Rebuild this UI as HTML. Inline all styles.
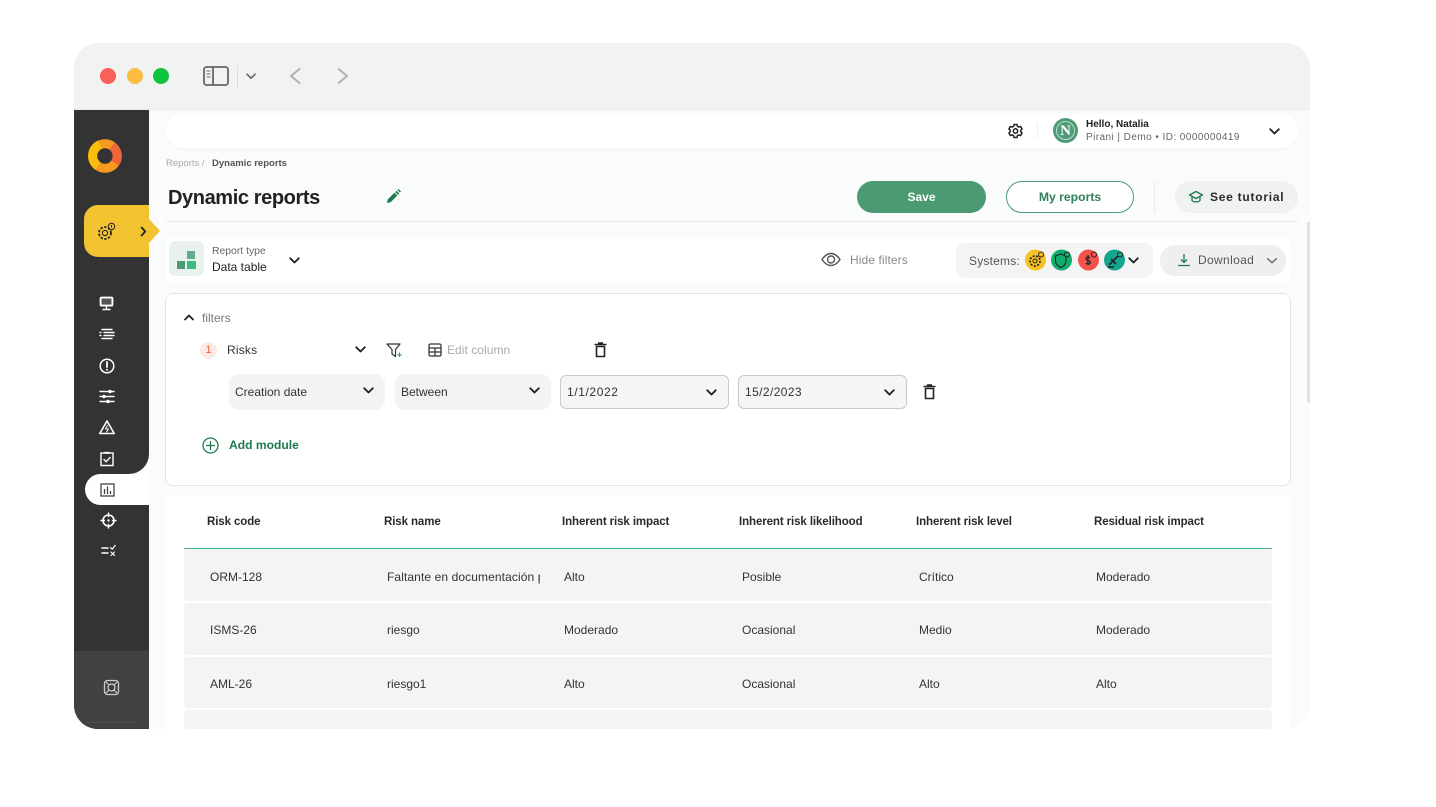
<!DOCTYPE html>
<html lang="en">
<head>
<meta charset="utf-8">
<title>Dynamic reports</title>
<style>
*{box-sizing:border-box;margin:0;padding:0}
html,body{width:1436px;height:807px;background:#fff;overflow:hidden}
body{position:relative;font-family:"Liberation Sans",sans-serif;color:#222}
.a{position:absolute}
.t{position:absolute;white-space:nowrap;font-size:12px;line-height:14px;color:#333}
svg{position:absolute;overflow:visible}
.win{left:74px;top:43px;width:1236px;height:686px;border-radius:24px;overflow:hidden;background:#fafbfc}
.ch{fill:none;stroke:#1e1e1e;stroke-width:1.8;stroke-linecap:round;stroke-linejoin:round}
.ic{fill:none;stroke:#fff;stroke-width:1.4;stroke-linecap:round;stroke-linejoin:round}
.sel{position:absolute;background:#f3f3f3;border-radius:10px}
.row{position:absolute;left:184px;width:1088px;background:#f4f4f4;border-radius:3px}
.th{position:absolute;top:515px;font-size:11.5px;line-height:14px;font-weight:bold;color:#2a2a2a;white-space:nowrap;letter-spacing:-.1px}
.td{position:absolute;font-size:12px;line-height:14px;color:#333;white-space:nowrap}
</style>
</head>
<body>
<div class="a win"></div>
<!-- title bar -->
<div class="a" style="left:74px;top:43px;width:1236px;height:67px;background:#f1f2f2;border-radius:24px 24px 0 0;border-bottom:1px solid #e8eaea"></div>
<div class="a" style="left:100px;top:68px;width:16px;height:16px;border-radius:50%;background:#f8605a"></div>
<div class="a" style="left:127px;top:68px;width:16px;height:16px;border-radius:50%;background:#fbbd3f"></div>
<div class="a" style="left:153px;top:68px;width:16px;height:16px;border-radius:50%;background:#0dc23f"></div>
<svg style="left:203px;top:66px" width="26" height="20" viewBox="0 0 26 20"><rect x="1" y="1" width="24" height="18" rx="2.5" fill="none" stroke="#666" stroke-width="1.8"/><path d="M10 1v18" stroke="#666" stroke-width="1.8"/><path d="M3.5 5h4M3.5 8h4M3.5 11h4" stroke="#888" stroke-width="1.2"/></svg>
<div class="a" style="left:237px;top:65px;width:1px;height:23px;background:#dcdcdc"></div>
<svg style="left:246px;top:73px" width="10" height="7" viewBox="0 0 10 7"><path d="M1 1.2l4 4 4-4" fill="none" stroke="#666" stroke-width="1.6" stroke-linecap="round" stroke-linejoin="round"/></svg>
<svg style="left:289px;top:67px" width="13" height="18" viewBox="0 0 13 18"><path d="M11 1.5L2 9l9 7.5" fill="none" stroke="#b0b0b0" stroke-width="1.9"/></svg>
<svg style="left:336px;top:67px" width="13" height="18" viewBox="0 0 13 18"><path d="M2 1.5L11 9l-9 7.5" fill="none" stroke="#b0b0b0" stroke-width="1.9"/></svg>

<!-- sidebar -->
<div class="a" style="left:74px;top:110px;width:75px;height:619px;background:#333;border-radius:0 0 0 24px;overflow:hidden">
  <div class="a" style="left:0;top:541px;width:75px;height:78px;background:#414141"></div>
  <div class="a" style="left:12px;top:612px;width:52px;height:1px;background:#4f4f4f"></div>
</div>
<div class="a" style="left:149px;top:110px;width:1161px;height:619px;background:#fafbfc;border-radius:16px 0 24px 0"></div>
<!-- active item -->
<div class="a" style="left:129px;top:454px;width:20px;height:20px;background:#fafbfc"></div>
<div class="a" style="left:109px;top:434px;width:40px;height:40px;background:#333;border-radius:0 0 20px 0"></div>
<div class="a" style="left:85px;top:474px;width:64px;height:31px;background:#fff;border-radius:16px 0 0 16px"></div>
<!-- logo -->
<svg style="left:88px;top:139px" width="34" height="34" viewBox="0 0 34 34">
  <circle cx="17" cy="17" r="12.3" fill="none" stroke="#f59a1e" stroke-width="9"/>
  <path d="M24 7A12.3 12.3 0 0 1 27 24" fill="none" stroke="#f0643c" stroke-width="9"/>
  <path d="M10 27A12.3 12.3 0 0 1 12 5.5" fill="none" stroke="#fbbc0c" stroke-width="9"/>
</svg>
<!-- yellow tab -->
<div class="a" style="left:84px;top:205px;width:65px;height:52px;background:#f2c230;border-radius:14px 0 0 14px"></div>
<svg style="left:149px;top:219px" width="11" height="24" viewBox="0 0 11 24"><path d="M0 0l11 12L0 24z" fill="#f2c230"/></svg>
<svg style="left:97px;top:222px" width="20" height="19" viewBox="0 0 20 19">
  <circle cx="8" cy="11" r="2.6" fill="none" stroke="#222" stroke-width="1.1"/>
  <circle cx="8" cy="11" r="6" fill="none" stroke="#222" stroke-width="1.8" stroke-dasharray="2.3 1.6"/>
  <circle cx="14.5" cy="4.5" r="3.2" fill="none" stroke="#222" stroke-width="1"/>
  <path d="M14.5 3v2.5" stroke="#222" stroke-width="1"/>
</svg>
<svg style="left:140px;top:226px" width="7" height="11" viewBox="0 0 7 11"><path d="M1.2 1l4 4.5-4 4.500" fill="none" stroke="#222" stroke-width="1.8"/></svg>
<!-- sidebar icons -->
<svg style="left:98px;top:295px" width="18" height="17" viewBox="0 0 18 17"><rect x="2.6" y="2.6" width="11.8" height="8" rx=".8" fill="#555" stroke="#fff" stroke-width="1.9"/><path d="M8.5 12v2M5 14.500h7" class="ic"/></svg>
<svg style="left:99px;top:327px" width="17" height="15" viewBox="0 0 17 15"><path d="M3 2.5h10M5 5.5h10M5 8.5h10M3 11.5h10" class="ic"/><path d="M1 5.5h1M1 8.5h1" class="ic"/></svg>
<svg style="left:98px;top:357px" width="18" height="18" viewBox="0 0 18 18"><circle cx="9" cy="9" r="6.8" fill="none" stroke="#fff" stroke-width="1.5"/><path d="M9 5v5" class="ic" style="stroke-width:1.8"/><circle cx="9" cy="12.7" r="1" fill="#fff"/></svg>
<svg style="left:98px;top:388px" width="18" height="17" viewBox="0 0 18 17"><path d="M2 3.5h14M2 8.5h14M2 13.5h14" class="ic"/><circle cx="12" cy="3.5" r="1.7" fill="#fff"/><circle cx="6" cy="8.5" r="1.7" fill="#fff"/><circle cx="10" cy="13.5" r="1.7" fill="#fff"/></svg>
<svg style="left:98px;top:419px" width="18" height="17" viewBox="0 0 18 17"><path d="M9 2L1.8 14.500h14.4z" class="ic" style="stroke-width:1.6"/><path d="M9.5 6.500L7.500 10h3l-2 3" class="ic" style="stroke-width:1"/></svg>
<svg style="left:99px;top:450px" width="16" height="17" viewBox="0 0 16 17"><rect x="2" y="3" width="12" height="12.5" fill="none" stroke="#fff" stroke-width="1.4"/><path d="M5.500 1.800h5v2h-5z" fill="#fff"/><path d="M5 9.500l2.200 2.200L11 7.500" class="ic"/></svg>
<svg style="left:100px;top:483px" width="15" height="14" viewBox="0 0 15 14"><rect x="1" y="1" width="13" height="12" fill="none" stroke="#444" stroke-width="1.3"/><path d="M4.500 11V6M7.500 11V3.500M10.500 11V8" stroke="#444" stroke-width="1.3"/></svg>
<svg style="left:100px;top:512px" width="17" height="17" viewBox="0 0 17 17"><circle cx="8.5" cy="8.5" r="5.5" fill="none" stroke="#fff" stroke-width="1.6"/><path d="M8.500 1v3.500M8.500 12.500V16M1 8.500h3.500M12.500 8.500H16" class="ic"/><circle cx="8.5" cy="8.5" r="1.2" fill="#fff"/></svg>
<svg style="left:100px;top:544px" width="17" height="13" viewBox="0 0 17 13"><path d="M1.500 4h7M1.500 9h7" stroke="#fff" stroke-width="1.6"/><path d="M10.500 3.500l1.700 1.700 3-3.700M11 8l3.500 3.500M14.500 8L11 11.500" class="ic" style="stroke-width:1.2"/></svg>
<svg style="left:103px;top:679px" width="17" height="17" viewBox="0 0 17 17"><rect x="1.5" y="1.5" width="14" height="14" rx="3" fill="none" stroke="#ccc" stroke-width="1.3"/><circle cx="8.5" cy="8.5" r="3.5" fill="none" stroke="#ccc" stroke-width="1.3"/><path d="M3 3l3 3M14 3l-3 3M3 14l3-3M14 14l-3-3" stroke="#ccc" stroke-width="1.1"/></svg>

<!-- top bar -->
<div class="a" style="left:166px;top:113px;width:1132px;height:35px;background:#fff;border-radius:17px;box-shadow:0 1px 4px rgba(0,0,0,.03)"></div>
<svg style="left:1008px;top:123px" width="15" height="16" viewBox="0 0 15 16"><circle cx="7.5" cy="8" r="2.2" fill="none" stroke="#222" stroke-width="1.5"/><path d="M6 1.500h3l.4 1.800 1.500.8 1.800-.6 1.400 2.500-1.300 1.200v1.600l1.300 1.200-1.400 2.500-1.800-.6-1.500.8-.4 1.800H6l-.4-1.800-1.500-.8-1.800.6L.9 10l1.300-1.200V7.200L.9 6l1.400-2.500 1.800.6 1.500-.8z" fill="none" stroke="#222" stroke-width="1.5" stroke-linejoin="round"/></svg>
<div class="a" style="left:1037px;top:123px;width:1px;height:16px;background:#eee"></div>
<div class="a" style="left:1053px;top:118px;width:25px;height:25px;border-radius:50%;background:#4f9a77"></div>
<div class="a" style="left:1056px;top:121px;width:19px;height:19px;border-radius:50%;border:1px solid #bcdccd"></div>
<div class="t" style="left:1053px;top:122px;width:25px;text-align:center;color:#fff;font-family:'Liberation Serif',serif;font-weight:bold;font-size:15px;line-height:18px">N</div>
<div class="t" style="left:1086px;top:118px;font-size:10px;line-height:13px;font-weight:bold;color:#222;">Hello, Natalia</div>
<div class="t" style="left:1086px;top:131px;font-size:10px;line-height:13px;color:#666;letter-spacing:.44px">Pirani | Demo • ID: 0000000419</div>
<svg style="left:1269px;top:128px" width="11" height="7" viewBox="0 0 11 7"><path class="ch" d="M1.2 1.2l4.300 4.300 4.300-4.300"/></svg>

<!-- breadcrumb + title -->
<div class="t" style="left:166px;top:158px;font-size:9.5px;line-height:12px;color:#aaa">Reports /</div>
<div class="t" style="left:212px;top:158px;font-size:9.5px;line-height:12px;color:#555;font-weight:bold;">Dynamic reports</div>
<div class="t" style="left:168px;top:185px;font-size:20px;line-height:26px;font-weight:bold;color:#222;letter-spacing:-.4px">Dynamic reports</div>
<svg style="left:385px;top:188px" width="17" height="17" viewBox="0 0 17 17"><path d="M2 15l.8-3.600L11.500 2.700l2.800 2.800-8.700 8.700z" fill="#1d7a4c"/><path d="M10 4.500l2.800 2.800" stroke="#fafbfc" stroke-width="1"/><path d="M13 1.500l2.500 2.500" stroke="#1d7a4c" stroke-width="1.5"/></svg>
<div class="a" style="left:857px;top:181px;width:129px;height:32px;border-radius:16px;background:#4c9a72"></div>
<div class="t" style="left:857px;top:190px;width:129px;text-align:center;color:#fff;font-weight:bold;font-size:12px">Save</div>
<div class="a" style="left:1006px;top:181px;width:128px;height:32px;border-radius:16px;background:#fff;border:1px solid #4c9a72"></div>
<div class="t" style="left:1006px;top:190px;width:128px;text-align:center;color:#2f8059;font-weight:bold;font-size:12.2px">My reports</div>
<div class="a" style="left:1154px;top:181px;width:1px;height:32px;background:#e9eaea"></div>
<div class="a" style="left:1175px;top:181px;width:123px;height:32px;border-radius:16px;background:#f0f1f1"></div>
<svg style="left:1188px;top:190px" width="16" height="14" viewBox="0 0 16 14"><path d="M8 1.500L1.500 5 8 8.500 14.500 5z" fill="none" stroke="#1d7a4c" stroke-width="1.3" stroke-linejoin="round"/><path d="M4 7v3.500c1.500 1.800 6.500 1.800 8 0V7" fill="none" stroke="#1d7a4c" stroke-width="1.3"/></svg>
<div class="t" style="left:1210px;top:190px;font-weight:bold;font-size:12px;letter-spacing:.75px;color:#2a2a2a">See tutorial</div>
<div class="a" style="left:166px;top:221px;width:1132px;height:1px;background:#e6e8e9"></div>
<div class="a" style="left:1307px;top:222px;width:3px;height:181px;background:#e3e3e3"></div>

<!-- toolbar -->
<div class="a" style="left:166px;top:238px;width:1125px;height:45px;background:#fff;border-radius:8px"></div>
<div class="a" style="left:169px;top:241px;width:35px;height:35px;border-radius:6px;background:#e9f2ee"></div>
<div class="a" style="left:187px;top:251px;width:8px;height:8px;background:#60ae8a"></div>
<div class="a" style="left:177px;top:261px;width:8px;height:8px;background:#4f9a77"></div>
<div class="a" style="left:187px;top:261px;width:9px;height:8px;background:#3cbb7f"></div>
<div class="t" style="left:212px;top:245px;font-size:10.4px;color:#666">Report type</div>
<div class="t" style="left:212px;top:260px;font-size:12px;color:#222;">Data table</div>
<svg style="left:289px;top:257px" width="11" height="7" viewBox="0 0 11 7"><path class="ch" d="M1.2 1.2l4.300 4.300 4.300-4.300"/></svg>
<svg style="left:821px;top:252px" width="20" height="15" viewBox="0 0 20 15"><path d="M1 7.500C4 3 7 1.500 10 1.500s6 1.500 9 6c-3 4.500-6 6-9 6s-6-1.500-9-6z" fill="none" stroke="#555" stroke-width="1.4"/><circle cx="10" cy="7.5" r="3.5" fill="none" stroke="#555" stroke-width="1.4"/></svg>
<div class="t" style="left:850px;top:253px;color:#888;letter-spacing:.1px">Hide filters</div>
<div class="a" style="left:956px;top:243px;width:197px;height:35px;border-radius:9px;background:#f4f4f4"></div>
<div class="t" style="left:969px;top:254px;color:#555;letter-spacing:.2px">Systems:</div>
<svg style="left:1025px;top:249px" width="21" height="22" viewBox="0 0 21 22"><circle cx="10.5" cy="11" r="10.5" fill="#f6c123"/><circle cx="10" cy="12" r="5" fill="none" stroke="#222" stroke-width="1.7" stroke-dasharray="2 1.5"/><circle cx="10" cy="12" r="2" fill="none" stroke="#222"/><circle cx="16" cy="5.5" r="2.5" fill="none" stroke="#222"/></svg>
<svg style="left:1051px;top:249px" width="21" height="22" viewBox="0 0 21 22"><circle cx="10.5" cy="11" r="10.5" fill="#12ae6e"/><path d="M4.500 7l5.500-2 5 2v5c0 3-2 5-5 6.500C6.500 17 4.500 15 4.500 12z" fill="none" stroke="#222" stroke-width="1.1"/><circle cx="16" cy="5.5" r="2.5" fill="#12ae6e" stroke="#222"/></svg>
<svg style="left:1078px;top:249px" width="21" height="22" viewBox="0 0 21 22"><circle cx="10.5" cy="11" r="10.5" fill="#f4524c"/><path d="M12 9c-1-1.500-4-1.500-4 .5S12.500 11.500 12.500 13.500s-3.500 2-4.500.5M10 6v10" fill="none" stroke="#222" stroke-width="1.2"/><circle cx="16" cy="5.5" r="2.5" fill="#f4524c" stroke="#222"/></svg>
<svg style="left:1104px;top:249px" width="21" height="22" viewBox="0 0 21 22"><circle cx="10.5" cy="11" r="10.5" fill="#15a78e"/><path d="M5 16l9-9M7 10l5 5M4 18h6" fill="none" stroke="#222" stroke-width="1.6"/><circle cx="16" cy="5.5" r="2.5" fill="#15a78e" stroke="#222"/></svg>
<svg style="left:1128px;top:257px" width="11" height="7" viewBox="0 0 11 7"><path class="ch" d="M1.2 1.2l4.300 4.300 4.300-4.300"/></svg>
<div class="a" style="left:1160px;top:245px;width:126px;height:31px;border-radius:15px;background:#efefef"></div>
<svg style="left:1177px;top:253px" width="14" height="14" viewBox="0 0 14 14"><path d="M7 1v8M4 6.500L7 9.500l3-3M1 12.500h12" fill="none" stroke="#1d7a4c" stroke-width="1.3"/></svg>
<div class="t" style="left:1198px;top:253px;color:#555;letter-spacing:.35px">Download</div>
<svg style="left:1266px;top:257px" width="12" height="7" viewBox="0 0 12 7"><path d="M1.2 1.2L6 5.700l4.800-4.500" fill="none" stroke="#666" stroke-width="1.4"/></svg>

<!-- filters -->
<div class="a" style="left:165px;top:293px;width:1126px;height:193px;background:#fff;border:1px solid #e4e6e6;border-radius:8px"></div>
<svg style="left:184px;top:314px" width="10" height="7" viewBox="0 0 10 7"><path class="ch" d="M1 5.500l4-4 4 4"/></svg>
<div class="t" style="left:202px;top:311px;color:#777">filters</div>
<div class="a" style="left:200px;top:342px;width:17px;height:17px;border-radius:50%;background:#fde9e6"></div>
<div class="t" style="left:200px;top:343px;width:17px;text-align:center;color:#f0602e;font-size:11px">1</div>
<div class="t" style="left:227px;top:343px;color:#333;letter-spacing:.2px">Risks</div>
<svg style="left:355px;top:346px" width="11" height="7" viewBox="0 0 11 7"><path class="ch" d="M1.2 1.2l4.300 4.300 4.300-4.300"/></svg>
<svg style="left:386px;top:343px" width="17" height="15" viewBox="0 0 17 15"><path d="M1 1h13L9.500 6.500v7L6 11V6.500z" fill="none" stroke="#333" stroke-width="1.2" stroke-linejoin="round"/><path d="M13.500 9.500v4.500M11.300 11.800h4.400" stroke="#2fa26f" stroke-width="1.2"/></svg>
<svg style="left:428px;top:343px" width="14" height="14" viewBox="0 0 14 14"><rect x="1" y="1" width="12" height="12" rx="1.5" fill="none" stroke="#333" stroke-width="1.3"/><path d="M1 5h12M1 9h12M7 5v8" stroke="#333" stroke-width="1.2"/></svg>
<div class="t" style="left:447px;top:343px;color:#aaa;letter-spacing:.05px">Edit column</div>
<svg style="left:594px;top:342px" width="13" height="16" viewBox="0 0 13 16"><path d="M2.500 4.500h8v10h-8zM.5 2.500h12M4 1h5" fill="none" stroke="#222" stroke-width="1.6"/></svg>
<div class="sel" style="left:229px;top:374px;width:156px;height:36px"></div>
<div class="t" style="left:235px;top:385px;color:#333;">Creation date</div>
<svg style="left:363px;top:387px" width="11" height="7" viewBox="0 0 11 7"><path class="ch" d="M1.2 1.2l4.300 4.300 4.300-4.300"/></svg>
<div class="sel" style="left:395px;top:374px;width:156px;height:36px"></div>
<div class="t" style="left:401px;top:385px;color:#333">Between</div>
<svg style="left:529px;top:387px" width="11" height="7" viewBox="0 0 11 7"><path class="ch" d="M1.2 1.2l4.300 4.300 4.300-4.300"/></svg>
<div class="sel" style="left:560px;top:375px;width:169px;height:34px;border:1px solid #c9c9c9;background:#f5f5f5;border-radius:6px"></div>
<div class="t" style="left:567px;top:385px;color:#333;letter-spacing:.6px">1/1/2022</div>
<svg style="left:706px;top:389px" width="11" height="7" viewBox="0 0 11 7"><path class="ch" d="M1.2 1.2l4.300 4.300 4.300-4.300"/></svg>
<div class="sel" style="left:738px;top:375px;width:169px;height:34px;border:1px solid #c9c9c9;background:#f5f5f5;border-radius:6px"></div>
<div class="t" style="left:745px;top:385px;color:#333;letter-spacing:.4px">15/2/2023</div>
<svg style="left:884px;top:389px" width="11" height="7" viewBox="0 0 11 7"><path class="ch" d="M1.2 1.2l4.300 4.300 4.300-4.300"/></svg>
<svg style="left:923px;top:384px" width="13" height="16" viewBox="0 0 13 16"><path d="M2.500 4.500h8v10h-8zM.5 2.500h12M4 1h5" fill="none" stroke="#222" stroke-width="1.6"/></svg>
<svg style="left:202px;top:437px" width="17" height="17" viewBox="0 0 17 17"><circle cx="8.5" cy="8.5" r="7.5" fill="none" stroke="#1d7a4c" stroke-width="1.3"/><path d="M8.500 4v9M4 8.500h9" stroke="#1d7a4c" stroke-width="1.3"/></svg>
<div class="t" style="left:229px;top:438px;color:#1d7a4c;font-weight:bold;font-size:12.1px">Add module</div>

<!-- table -->
<div class="a" style="left:165px;top:495px;width:1126px;height:234px;background:#fff;border-radius:8px 8px 0 0"></div>
<div class="th" style="left:207px">Risk code</div>
<div class="th" style="left:384px">Risk name</div>
<div class="th" style="left:562px">Inherent risk impact</div>
<div class="th" style="left:739px">Inherent risk likelihood</div>
<div class="th" style="left:916px">Inherent risk level</div>
<div class="th" style="left:1094px">Residual risk impact</div>
<div class="a" style="left:184px;top:548px;width:1088px;height:1px;background:#44b97f"></div>
<div class="row" style="top:549px;height:52px"></div>
<div class="row" style="top:603px;height:52px"></div>
<div class="row" style="top:657px;height:51px"></div>
<div class="row" style="top:710px;height:19px"></div>

<div class="td" style="left:210px;top:570px;">ORM-128</div>
<div class="td" style="left:387px;top:570px;width:153px;overflow:hidden;letter-spacing:.1px">Faltante en documentación para</div>
<div class="td" style="left:564px;top:570px">Alto</div>
<div class="td" style="left:742px;top:570px">Posible</div>
<div class="td" style="left:919px;top:570px">Crítico</div>
<div class="td" style="left:1096px;top:570px">Moderado</div>

<div class="td" style="left:210px;top:623px;">ISMS-26</div>
<div class="td" style="left:387px;top:623px">riesgo</div>
<div class="td" style="left:564px;top:623px">Moderado</div>
<div class="td" style="left:742px;top:623px">Ocasional</div>
<div class="td" style="left:919px;top:623px">Medio</div>
<div class="td" style="left:1096px;top:623px">Moderado</div>

<div class="td" style="left:210px;top:677px;">AML-26</div>
<div class="td" style="left:387px;top:677px">riesgo1</div>
<div class="td" style="left:564px;top:677px">Alto</div>
<div class="td" style="left:742px;top:677px">Ocasional</div>
<div class="td" style="left:919px;top:677px">Alto</div>
<div class="td" style="left:1096px;top:677px">Alto</div>
</body>
</html>
